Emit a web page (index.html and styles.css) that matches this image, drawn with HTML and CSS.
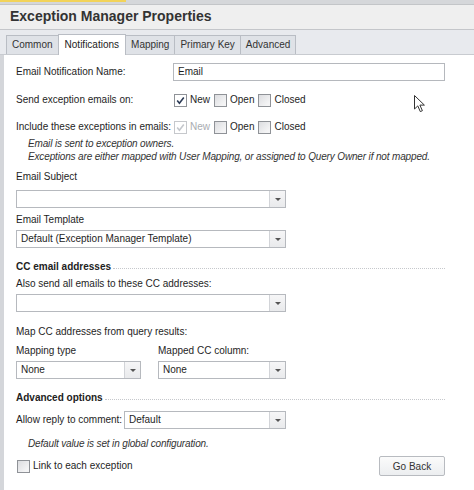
FILE: index.html
```html
<!DOCTYPE html>
<html>
<head>
<meta charset="utf-8">
<link rel="stylesheet" href="styles.css">
</head>
<body>
<div class="window">
  <div class="topstrip"><div class="yellow"></div></div>
  <div class="titlebar">Exception Manager Properties</div>
  <div class="tabstrip">
    <div class="tab">Common</div>
    <div class="tab active">Notifications</div>
    <div class="tab">Mapping</div>
    <div class="tab">Primary Key</div>
    <div class="tab">Advanced</div>
  </div>
  <div class="body">
    <div class="leftbar"></div>
    <div class="content">
      <div class="row r-name">
        <span class="lbl w157">Email Notification Name:</span>
        <div class="textbox">Email</div>
      </div>
      <div class="row r-send">
        <span class="lbl w158">Send exception emails on:</span>
        <label class="cb"><span class="box checked"><svg width="9" height="9" viewBox="0 0 9 9"><path d="M1.2 4.6 L3.4 7.2 L7.8 1.4" fill="none" stroke="#2b3a55" stroke-width="1.6"/></svg></span>New</label>
        <label class="cb"><span class="box"></span>Open</label>
        <label class="cb"><span class="box"></span>Closed</label>
      </div>
      <div class="row r-incl">
        <span class="lbl w158">Include these exceptions in emails:</span>
        <label class="cb disabled"><span class="box checked dis"><svg width="9" height="9" viewBox="0 0 9 9"><path d="M1.2 4.6 L3.4 7.2 L7.8 1.4" fill="none" stroke="#c4c7cc" stroke-width="1.6"/></svg></span>New</label>
        <label class="cb"><span class="box"></span>Open</label>
        <label class="cb"><span class="box"></span>Closed</label>
      </div>
      <div class="note n1">Email is sent to exception owners.<br>Exceptions are either mapped with User Mapping, or assigned to Query Owner if not mapped.</div>
      <div class="lbl l-subj">Email Subject</div>
      <div class="combo c-wide m6"><span class="val"></span><span class="drop"><i></i></span></div>
      <div class="lbl l-tmpl">Email Template</div>
      <div class="combo c-wide m4"><span class="val">Default (Exception Manager Template)</span><span class="drop"><i></i></span></div>
      <div class="section s-cc"><span class="stitle">CC email addresses</span><span class="dots"></span></div>
      <div class="lbl l-also">Also send all emails to these CC addresses:</div>
      <div class="combo c-wide m3"><span class="val"></span><span class="drop"><i></i></span></div>
      <div class="lbl l-map">Map CC addresses from query results:</div>
      <div class="pair">
        <div class="col c1">
          <div class="lbl">Mapping type</div>
          <div class="combo c-small"><span class="val">None</span><span class="drop"><i></i></span></div>
        </div>
        <div class="col c2">
          <div class="lbl">Mapped CC column:</div>
          <div class="combo c-mid"><span class="val">None</span><span class="drop"><i></i></span></div>
        </div>
      </div>
      <div class="section s-adv"><span class="stitle">Advanced options</span><span class="dots"></span></div>
      <div class="row r-allow">
        <span class="lbl w108">Allow reply to comment:</span>
        <div class="combo c-allow"><span class="val">Default</span><span class="drop"><i></i></span></div>
      </div>
      <div class="note n2">Default value is set in global configuration.</div>
      <div class="row r-last">
        <label class="cb link"><span class="box"></span>Link to each exception</label>
        <button class="btn">Go Back</button>
      </div>
    </div>
  </div>
  <svg class="cursor" width="16" height="20" viewBox="0 0 16 20"><path d="M1.5 1.5 L1.5 15 L4.8 11.9 L7.3 17.6 L9.4 16.7 L6.9 11.1 L11.4 11.1 Z" fill="#fff" stroke="#333" stroke-width="1"/></svg>
</div>
</body>
</html>
```
FILE: styles.css
```css
* { box-sizing: border-box; }
html, body { margin: 0; padding: 0; background: #fff; }
body {
  font-family: "Liberation Sans", Arial, sans-serif;
  font-size: 10px;
  line-height: 14px;
  color: #1e1e1e;
}
.window { width: 474px; height: 490px; overflow: hidden; position: relative; background: #fff; }
.topstrip { height: 5px; background: #d5d7da; border-bottom: 1px solid #c3c5c8; }
.yellow { width: 126px; height: 2px; background: #f2d35a; }
.titlebar {
  height: 25px;
  background: #efefef;
  border-bottom: 1px solid #c4c6ca;
  font-weight: bold;
  font-size: 14px;
  line-height: 23px;
  color: #333;
  padding-left: 10px;
}
.tabstrip {
  height: 25px;
  background: #e8eaee;
  border-bottom: 1px solid #c8cbd0;
  display: flex;
  align-items: flex-end;
  padding-left: 6px;
}
.tab {
  height: 19px;
  line-height: 18px;
  padding: 0 5px;
  background: #dfe2e7;
  border: 1px solid #b9bdc4;
  border-bottom: none;
  color: #333;
  margin-right: -1px;
  white-space: nowrap;
}
.tab.active {
  height: 21px;
  line-height: 20px;
  padding: 0 6px;
  background: #fff;
  margin-bottom: -1px;
  position: relative;
  color: #222;
}
.body { display: flex; height: 435px; }
.leftbar { width: 4px; background: #d4d6da; }
.content { flex: 1; padding: 8px 0 0 12px; }
.row { display: flex; align-items: center; }
.lbl { display: block; white-space: nowrap; }
.w157 { width: 157px; flex: none; }
.w158 { width: 158px; flex: none; }
.w108 { width: 108px; flex: none; }
.textbox {
  width: 272px;
  height: 18px;
  border: 1px solid #b5b8bd;
  padding: 0 4px;
  line-height: 16px;
}
.r-send { margin-top: 11px; height: 16px; }
.r-incl { margin-top: 11px; height: 16px; }
.cb { display: flex; align-items: center; margin-right: 4px; color: #1e1e1e; white-space: nowrap; }
.cb.disabled { color: #a9acb1; }
.box {
  width: 13px; height: 13px;
  border: 1px solid #8f9297;
  background: linear-gradient(135deg, #dcdde0 0%, #f4f4f5 80%);
  margin-right: 3px;
  display: flex; align-items: center; justify-content: center;
  flex: none;
}
.box.checked { background: #fff; border-color: #8f9297; }
.box.dis { border-color: #c6c8cc; }
.note { font-style: italic; color: #333; line-height: 13px; padding-left: 12px; white-space: nowrap; letter-spacing: -0.15px; }
.n1 { margin-top: 2px; }
.l-subj { margin-top: 7px; }
.combo {
  height: 18px;
  border: 1px solid #b6b9be;
  display: flex;
  align-items: stretch;
}
.combo .val { flex: 1; padding-left: 4px; line-height: 16px; white-space: nowrap; overflow: hidden; }
.combo .drop {
  width: 16px;
  border-left: 1px solid #d2d4d8;
  background: linear-gradient(#f6f6f7, #e9eaec);
  display: flex; align-items: center; justify-content: center;
}
.combo .drop i {
  width: 0; height: 0;
  border-left: 3px solid transparent;
  border-right: 3px solid transparent;
  border-top: 3px solid #555;
}
.c-wide { width: 270px; }
.m6 { margin-top: 6px; }
.m4 { margin-top: 3px; }
.m3 { margin-top: 3px; }
.l-tmpl { margin-top: 5px; }
.section { display: flex; align-items: center; margin-top: 12px; height: 14px; }
.stitle { font-weight: bold; color: #222; white-space: nowrap; padding-right: 2px; }
.dots { flex: 1; border-bottom: 1px dotted #c6c8cc; margin-right: 29px; margin-top: 3px; }
.l-also { margin-top: 3px; }
.l-map { margin-top: 13px; }
.pair { display: flex; margin-top: 5px; }
.col .combo { margin-top: 3px; }
.c1 { width: 142px; }
.c-small { width: 125px; }
.c-mid { width: 128px; }
.r-allow { margin-top: 6px; }
.c-allow { width: 162px; }
.n2 { margin-top: 8px; }
.r-last { margin-top: 6px; justify-content: space-between; padding-right: 29px; height: 20px; }
.link { margin-left: 1px; }
.btn {
  width: 66px; height: 20px;
  border: 1px solid #b8bbc0;
  border-radius: 2px;
  background: linear-gradient(#fbfbfb, #eceef0);
  font-family: inherit;
  font-size: 10px;
  color: #333;
  padding: 0;
}
.cursor { position: absolute; left: 413px; top: 94px; }
```
